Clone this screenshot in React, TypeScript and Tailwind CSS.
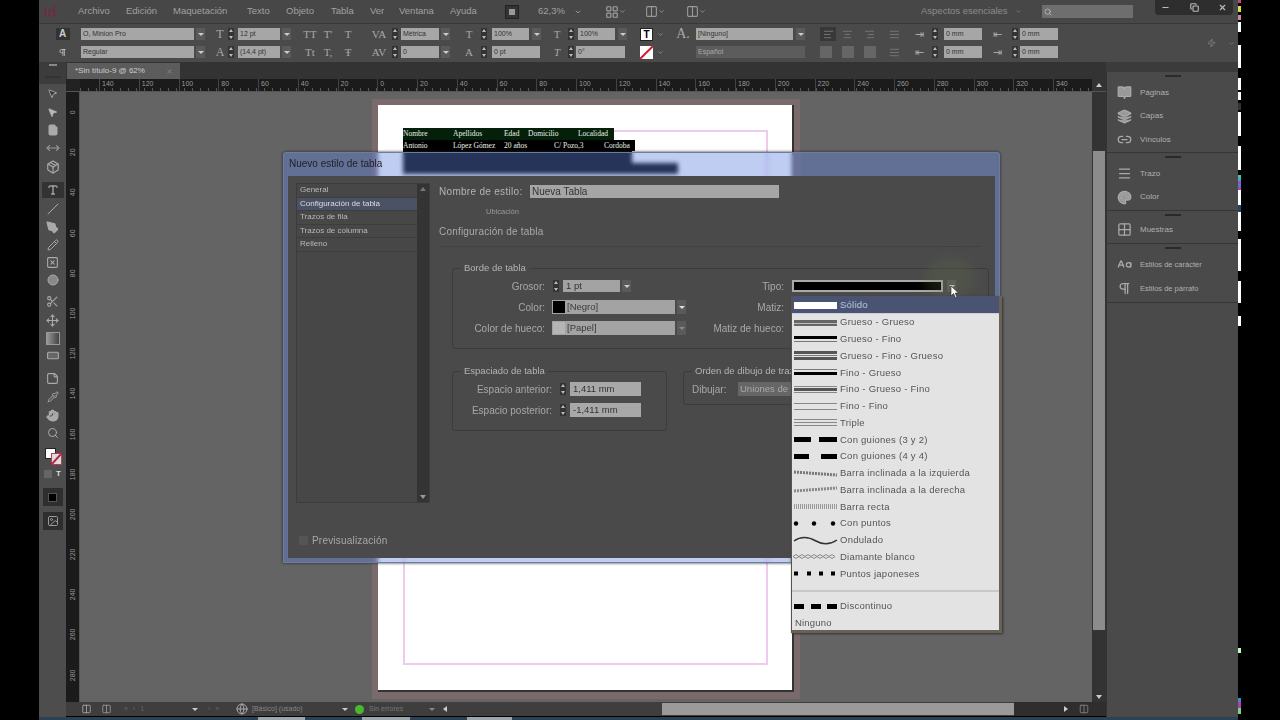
import React from "react";
import {
  MousePointer2, File, MoveHorizontal, Package, Type, Slash, PenTool, Pencil, SquareX, Circle, Scissors, Move, RectangleHorizontal,
  StickyNote, Pipette, Hand, Search, BookOpen, Layers, Link2, Menu, Palette, Grid2x2, CaseSensitive, Pilcrow, Zap, X, Minus, Copy,
  AlignLeft, AlignCenter, AlignRight, AlignJustify, ChevronDown, Globe, LayoutGrid, Columns2, Image,
} from "lucide-react";

const font = "font-['Liberation_Sans',Arial,sans-serif]";

function Chev({ dim }: { dim?: boolean }) {
  return (
    <div className={`w-[9px] h-[12px] flex items-center justify-center ${dim ? "bg-[#4d4d4d]" : "bg-[#5a5a5a]"}`}>
      <div className={`w-0 h-0 border-l-[3px] border-r-[3px] border-t-[3px] border-l-transparent border-r-transparent ${dim ? "border-t-[#888]" : "border-t-[#ccc]"}`}></div>
    </div>
  );
}

function Spin() {
  return (
    <div className="w-[6px] h-[12px] flex flex-col justify-between py-[1px] bg-[#333] items-center">
      <div className="w-0 h-0 border-l-[2px] border-r-[2px] border-b-[3px] border-l-transparent border-r-transparent border-b-[#bbb]"></div>
      <div className="w-0 h-0 border-l-[2px] border-r-[2px] border-t-[3px] border-l-transparent border-r-transparent border-t-[#bbb]"></div>
    </div>
  );
}

function Field({ w, v, dark }: { w: string; v?: string; dark?: boolean }) {
  return (
    <div className={`${w} h-[12px] ${dark ? "bg-[#5c5c5c] text-[#aaa]" : "bg-[#a6a6a6] text-[#333]"} text-[7px] leading-[12px] pl-[2px] overflow-hidden whitespace-nowrap`}>
      {v}
    </div>
  );
}

function TMark({ children, cls = "text-[11px]" }: { children: React.ReactNode; cls?: string }) {
  return <span className={`w-[16px] text-center font-['Liberation_Serif',serif] text-[#a8a8a8] leading-[12px] ${cls}`}>{children}</span>;
}

function Col({ cls, children }: { cls: string; children: React.ReactNode }) {
  return <div className={`flex flex-col gap-[6px] shrink-0 ${cls}`}>{children}</div>;
}

function Row({ children }: { children: React.ReactNode }) {
  return <div className="flex items-center h-[12px]">{children}</div>;
}

const menus: [string, string][] = [
  ["Archivo", "w-[48px]"],
  ["Edición", "w-[47px]"],
  ["Maquetación", "w-[74px]"],
  ["Texto", "w-[39px]"],
  ["Objeto", "w-[45px]"],
  ["Tabla", "w-[39px]"],
  ["Ver", "w-[29px]"],
  ["Ventana", "w-[51px]"],
  ["Ayuda", "w-[50px]"],
];

function MenuBar() {
  return (
    <div className="h-[23px] bg-[#474747] flex items-center text-[9.5px] text-[#a0a0a0] shrink-0">
      <div className="w-[39px] pl-[5px] text-[14px] text-[#6d2c48] font-bold leading-none">Id</div>
      {menus.map(([m, w]) => (
        <div key={m} className={`${w} shrink-0`}>{m}</div>
      ))}
      <div className="w-[14px] h-[14px] ml-[5px] border border-[#222] bg-[#333] flex items-center justify-center shrink-0">
        <div className="w-[6px] h-[6px] bg-[#999]"></div>
      </div>
      <div className="ml-[19px] w-[30px] shrink-0">62,3%</div>
      <ChevronDown className="w-[8px] h-[8px] ml-[6px] text-[#bbb] shrink-0" />
      <LayoutGrid className="w-[14px] h-[14px] ml-[23px] text-[#a0a0a0] shrink-0" />
      <ChevronDown className="w-[7px] h-[7px] text-[#bbb] shrink-0" />
      <Columns2 className="w-[13px] h-[13px] ml-[19px] text-[#9a9a9a] shrink-0" />
      <ChevronDown className="w-[7px] h-[7px] text-[#bbb] shrink-0" />
      <Columns2 className="w-[13px] h-[13px] ml-[21px] text-[#9a9a9a] shrink-0" />
      <ChevronDown className="w-[7px] h-[7px] text-[#bbb] shrink-0" />
      <div className="ml-[215px] w-[92px] text-[#8c8c8c] shrink-0">Aspectos esenciales</div>
      <ChevronDown className="w-[7px] h-[7px] text-[#888] ml-[2px] shrink-0" />
      <div className="ml-[20px] w-[91px] h-[13px] bg-[#6e6e6e] flex items-center pl-[2px] shrink-0">
        <Search className="w-[8px] h-[8px] text-[#ccc]" />
      </div>
      <div className="ml-[22px] h-[15px] w-[78px] -mt-[8px] bg-[#2e2e2e] rounded-b-sm flex items-center justify-between px-[6px] text-[#bbb] shrink-0">
        <Minus className="w-[9px] h-[9px]" strokeWidth={3} />
        <Copy className="w-[9px] h-[9px]" strokeWidth={3} />
        <X className="w-[9px] h-[9px]" strokeWidth={3} />
      </div>
    </div>
  );
}

function ControlPanel() {
  return (
    <div className="h-[39px] bg-[#4a4a4a] border-t border-[#383838] pt-[4px] flex shrink-0 text-[#aaa]">
      <Col cls="w-[42px] items-center pl-[5px]">
        <Row><span className="w-[14px] h-[12px] bg-[#333] text-center text-[10px] leading-[12px] font-bold text-[#ccc]">A</span></Row>
        <Row><Pilcrow className="w-[9px] h-[9px] text-[#ccc]" /></Row>
      </Col>
      <Col cls="w-[131px]">
        <Row><Field w="w-[113px]" v="O, Minion Pro" /><div className="ml-[2px]"><Chev /></div></Row>
        <Row><Field w="w-[113px]" v="Regular" /><div className="ml-[2px]"><Chev /></div></Row>
      </Col>
      <Col cls="w-[90px]">
        <Row><TMark cls="text-[12px]">T</TMark><Spin /><div className="ml-[4px]"><Field w="w-[42px]" v="12 pt" /></div><div className="ml-[2px]"><Chev /></div></Row>
        <Row><TMark cls="text-[12px]">A</TMark><Spin /><div className="ml-[4px]"><Field w="w-[42px]" v="(14,4 pt)" /></div><div className="ml-[2px]"><Chev /></div></Row>
      </Col>
      <Col cls="w-[69px]">
        <Row><TMark>TT</TMark><div className="ml-[2px]"></div><TMark>T'</TMark><div className="ml-[4px]"></div><TMark>T</TMark></Row>
        <Row><TMark>Tt</TMark><div className="ml-[2px]"></div><TMark>T,</TMark><div className="ml-[4px]"></div><TMark>Ŧ</TMark></Row>
      </Col>
      <Col cls="w-[90px]">
        <Row><TMark>VA</TMark><div className="ml-[5px]"><Spin /></div><div className="ml-[3px]"><Field w="w-[38px]" v="Métrica" /></div><div className="ml-[2px]"><Chev /></div></Row>
        <Row><TMark>AV</TMark><div className="ml-[5px]"><Spin /></div><div className="ml-[3px]"><Field w="w-[38px]" v="0" /></div><div className="ml-[2px]"><Chev /></div></Row>
      </Col>
      <Col cls="w-[88px]">
        <Row><TMark>T</TMark><div className="ml-[4px]"><Spin /></div><div className="ml-[5px]"><Field w="w-[37px]" v="100%" /></div><div className="ml-[3px]"><Chev /></div></Row>
        <Row><TMark>A</TMark><div className="ml-[4px]"><Spin /></div><div className="ml-[5px]"><Field w="w-[48px]" v="0 pt" /></div></Row>
      </Col>
      <Col cls="w-[91px]">
        <Row><TMark>T</TMark><div className="ml-[3px]"><Spin /></div><div className="ml-[4px]"><Field w="w-[37px]" v="100%" /></div><div className="ml-[3px]"><Chev /></div></Row>
        <Row><TMark cls="text-[11px] italic">T</TMark><div className="ml-[3px]"><Spin /></div><div className="ml-[2px]"><Field w="w-[49px]" v="0°" /></div></Row>
      </Col>
      <Col cls="w-[35px]">
        <Row>
          <span className="w-[13px] h-[13px] bg-white border border-[#222] text-black text-[10px] leading-[11px] text-center font-bold">T</span>
          <ChevronDown className="w-[7px] h-[7px] ml-[4px]" />
        </Row>
        <Row>
          <svg width="13" height="13" viewBox="0 0 13 13"><rect width="13" height="13" fill="#fff" /><line x1="0" y1="13" x2="13" y2="0" stroke="#d02030" strokeWidth="2" /></svg>
          <ChevronDown className="w-[7px] h-[7px] ml-[4px]" />
        </Row>
      </Col>
      <Col cls="w-[145px]">
        <Row><TMark cls="text-[14px]">A.</TMark><div className="ml-[5px]"><Field w="w-[97px]" v="[Ninguno]" /></div><div className="ml-[3px]"><Chev /></div></Row>
        <Row><div className="ml-[21px]"><Field w="w-[109px]" v="Español" dark /></div></Row>
      </Col>
      <Col cls="w-[91px]">
        <Row>
          <div className="w-[16px] h-[14px] bg-[#383838] flex items-center justify-center"><AlignLeft className="w-[11px] h-[11px] text-[#777]" /></div>
          <AlignCenter className="w-[11px] h-[11px] ml-[6px] text-[#777]" />
          <AlignRight className="w-[11px] h-[11px] ml-[11px] text-[#777]" />
          <AlignJustify className="w-[11px] h-[11px] ml-[14px] text-[#777]" />
        </Row>
        <Row>
          <div className="w-[12px] h-[12px] bg-[#666]"></div>
          <div className="w-[12px] h-[12px] ml-[10px] bg-[#666]"></div>
          <div className="w-[12px] h-[12px] ml-[10px] bg-[#666]"></div>
          <AlignJustify className="w-[11px] h-[11px] ml-[13px] text-[#777]" />
        </Row>
      </Col>
      <Col cls="w-[78px]">
        <Row><TMark>⇥</TMark><div className="ml-[5px]"><Spin /></div><div className="ml-[6px]"><Field w="w-[38px]" v="0 mm" /></div></Row>
        <Row><TMark>⇤</TMark><div className="ml-[5px]"><Spin /></div><div className="ml-[6px]"><Field w="w-[38px]" v="0 mm" /></div></Row>
      </Col>
      <Col cls="w-[70px]">
        <Row><TMark>⇤</TMark><div className="ml-[7px]"><Spin /></div><div className="ml-[2px]"><Field w="w-[38px]" v="0 mm" /></div></Row>
        <Row><TMark>⇥</TMark><div className="ml-[7px]"><Spin /></div><div className="ml-[2px]"><Field w="w-[38px]" v="0 mm" /></div></Row>
      </Col>
      <div className="ml-[148px] flex items-center gap-[12px] h-[30px]">
        <Zap className="w-[9px] h-[16px] text-[#888]" />
        <ChevronDown className="w-[7px] h-[7px] text-[#888]" />
      </div>
    </div>
  );
}

const tools: [React.ReactNode, string][] = [
  [<MousePointer2 className="w-[11px] h-[11px] fill-[#333] text-[#aaa]" />, "h-[19px]"],
  [<MousePointer2 className="w-[11px] h-[11px] fill-[#bbb] text-[#aaa]" />, "h-[18px]"],
  [<File className="w-[12px] h-[12px] fill-[#aaa] text-[#aaa]" />, "h-[18px]"],
  [<MoveHorizontal className="w-[16px] h-[14px] text-[#999]" />, "h-[18px]"],
  [<Package className="w-[14px] h-[14px] text-[#aaa]" />, "h-[19px]"],
  [<div className="w-[22px] h-[16px] bg-[#333] flex items-center justify-center"><Type className="w-[12px] h-[12px] text-[#ccc]" /></div>, "h-[21px] mt-[3px]"],
  [<Slash className="w-[12px] h-[12px] text-[#aaa]" />, "h-[18px]"],
  [<PenTool className="w-[13px] h-[13px] fill-[#aaa] text-[#aaa]" />, "h-[18px]"],
  [<Pencil className="w-[12px] h-[12px] text-[#aaa]" />, "h-[18px]"],
  [<SquareX className="w-[13px] h-[13px] text-[#aaa]" />, "h-[17px]"],
  [<Circle className="w-[14px] h-[12px] fill-[#888] text-[#aaa]" />, "h-[18px]"],
  [<Scissors className="w-[13px] h-[13px] text-[#aaa]" />, "h-[20px] mt-[2px]"],
  [<Move className="w-[13px] h-[13px] text-[#aaa]" />, "h-[18px]"],
  [<div className="w-[14px] h-[13px] border border-[#999] bg-gradient-to-r from-[#999] to-[#444]"></div>, "h-[18px]"],
  [<RectangleHorizontal className="w-[14px] h-[13px] text-[#aaa] fill-[#666]" />, "h-[17px]"],
  [<StickyNote className="w-[13px] h-[13px] text-[#aaa]" />, "h-[20px] mt-[4px]"],
  [<Pipette className="w-[12px] h-[12px] text-[#aaa]" />, "h-[18px]"],
  [<Hand className="w-[13px] h-[13px] fill-[#aaa] text-[#aaa]" />, "h-[18px]"],
  [<Search className="w-[12px] h-[12px] text-[#aaa]" />, "h-[17px]"],
];

function Tools() {
  return (
    <div className="w-[27px] bg-[#4d4d4d] flex flex-col items-center shrink-0">
      <div className="h-[22px] w-full bg-[#3c3c3c] flex flex-col items-center">
        <div className="w-[8px] h-[2px] bg-[#888] mt-[2px]"></div>
        <div className="w-[16px] h-[2px] bg-[#333] mt-[10px]"></div>
      </div>
      {tools.map(([icon, h], i) => (
        <div key={i} className={`${h} w-full flex items-center justify-center shrink-0`}>{icon}</div>
      ))}
      <div className="mt-[6px] relative w-[20px] h-[19px] shrink-0">
        <div className="absolute left-[2px] top-[1px] w-[11px] h-[11px] bg-white border border-[#222]"></div>
        <svg className="absolute left-[8px] top-[6px]" width="11" height="12" viewBox="0 0 11 12"><rect x="0.5" y="0.5" width="10" height="11" fill="#ddd" stroke="#b04058" /><line x1="0" y1="12" x2="11" y2="0" stroke="#c02040" strokeWidth="2" /></svg>
      </div>
      <div className="flex items-center h-[16px] w-full pl-[5px] gap-[4px] shrink-0">
        <div className="w-[8px] h-[8px] bg-[#666]"></div>
        <span className="text-[8px] font-bold text-[#ddd]">T</span>
      </div>
      <div className="mt-[6px] w-[20px] h-[18px] bg-[#2e2e2e] flex items-center justify-center shrink-0">
        <div className="w-[9px] h-[9px] bg-black border border-[#555]"></div>
      </div>
      <div className="mt-[6px] w-[20px] h-[18px] bg-[#2e2e2e] flex items-center justify-center shrink-0">
        <Image className="w-[12px] h-[12px] text-[#999]" />
      </div>
    </div>
  );
}

const hLabels = ["140", "120", "100", "80", "60", "40", "20", "0", "20", "40", "60", "80", "100", "120", "140", "160", "180", "200", "220", "240", "260", "280", "300", "320", "340"];
const vLabels = ["0", "20", "40", "60", "80", "100", "120", "140", "160", "180", "200", "220", "240", "260", "280"];

function HRuler() {
  return (
    <div className="h-[13px] bg-[#1b1b1b] flex shrink-0 border-b border-[#555]">
      <div className="w-[14px] bg-[#222] shrink-0"></div>
      <div className="flex-1 flex pl-[19px] overflow-hidden bg-[repeating-linear-gradient(90deg,#555_0,#555_1px,transparent_1px,transparent_8px)] bg-[length:100%_3px] bg-bottom bg-no-repeat">
        {hLabels.map((l, i) => (
          <span key={i} className="w-[39.75px] shrink-0 pl-[2px] border-l border-[#444] text-[7px] leading-[10px] text-[#999]">{l}</span>
        ))}
      </div>
      <div className="w-[14px] bg-[#333] flex items-center justify-center shrink-0">
        <div className="w-0 h-0 border-l-[3px] border-r-[3px] border-b-[4px] border-l-transparent border-r-transparent border-b-[#ccc]"></div>
      </div>
    </div>
  );
}

function VRuler() {
  return (
    <div className="w-[14px] bg-[#1b1b1b] shrink-0 flex flex-col items-center overflow-hidden border-r border-[#555]">
      {vLabels.map((l, i) => (
        <span key={i} className="h-[40.2px] shrink-0 text-[7px] text-[#999] [writing-mode:vertical-rl] rotate-180 text-center leading-none">{l}</span>
      ))}
    </div>
  );
}

const tableRows = [
  { w: "w-[211px]", bg: "bg-[#05200a]", cells: [["Nombre", "w-[50px]"], ["Apellidos", "w-[51px]"], ["Edad", "w-[24px]"], ["Domicilio", "w-[50px]"], ["Localidad", "w-[36px]"]] },
  { w: "w-[232px]", bg: "bg-black", cells: [["Antonio", "w-[50px]"], ["López Gómez", "w-[51px]"], ["20 años", "w-[50px]"], ["C/ Pozo,3", "w-[50px]"], ["Cordoba", "w-[31px]"]] },
  { w: "w-[229px]", bg: "bg-black", cells: [] },
  { w: "w-[275px]", bg: "bg-black", cells: [] },
];

function PageSheet() {
  return (
    <div className="flex-1 bg-[#646464] pt-[7px] pl-[292px] overflow-hidden">
      <div className="w-[428px] h-[600px] bg-[#7b6a6c] pt-[6px] pl-[6px]">
        <div className="w-[416px] h-[587px] bg-white border-r-2 border-b-2 border-[#333] pt-[25px] pl-[25px]">
          <div className="w-[365px] h-[535px] border-2 border-[#eecbee]">
            <div className="-mt-[4px] -ml-[2px]">
              {tableRows.map((r, i) => (
                <div key={i} className={`${r.w} ${r.bg} h-[11.5px] flex text-[7.5px] leading-[11px] text-[#e8f0e8] font-['Liberation_Serif',serif] whitespace-nowrap`}>
                  {r.cells.map(([t, w]) => (
                    <span key={t} className={`${w} shrink-0`}>{t}</span>
                  ))}
                </div>
              ))}
            </div>
          </div>
        </div>
      </div>
    </div>
  );
}

function StatusBar() {
  return (
    <div className="h-[14px] bg-[#3e3e3e] flex items-center text-[7px] text-[#888] shrink-0">
      <div className="w-[15px] shrink-0"></div>
      <Columns2 className="w-[11px] h-[10px] text-[#aaa] shrink-0" />
      <Columns2 className="w-[11px] h-[10px] ml-[9px] text-[#999] shrink-0" />
      <span className="ml-[12px] tracking-[5px] w-[30px] text-[#666] shrink-0">«‹1</span>
      <div className="w-0 h-0 ml-[38px] border-l-[3px] border-r-[3px] border-t-[3px] border-l-transparent border-r-transparent border-t-[#ccc] shrink-0"></div>
      <span className="ml-[10px] tracking-[5px] w-[20px] text-[#666] shrink-0">›»</span>
      <Globe className="w-[12px] h-[12px] ml-[8px] text-[#aaa] shrink-0" />
      <span className="ml-[4px] w-[56px] shrink-0">[Básico] (usado)</span>
      <div className="w-0 h-0 ml-[34px] border-l-[3px] border-r-[3px] border-t-[3px] border-l-transparent border-r-transparent border-t-[#ccc] shrink-0"></div>
      <div className="w-[9px] h-[9px] ml-[7px] rounded-full bg-[#4cb830] shrink-0"></div>
      <span className="ml-[5px] w-[40px] text-[#777] shrink-0">Sin errores</span>
      <div className="w-0 h-0 ml-[20px] border-l-[3px] border-r-[3px] border-t-[3px] border-l-transparent border-r-transparent border-t-[#888] shrink-0"></div>
      <div className="w-0 h-0 ml-[8px] border-t-[3px] border-b-[3px] border-r-[4px] border-t-transparent border-b-transparent border-r-[#ccc] shrink-0"></div>
      <div className="ml-[215px] w-[352px] h-[12px] bg-[#9a9a9a] shrink-0"></div>
      <div className="flex-1 h-[14px] bg-[#2e2e2e] flex items-center pl-[50px]">
        <div className="w-0 h-0 border-t-[3px] border-b-[3px] border-l-[4px] border-t-transparent border-b-transparent border-l-[#ccc]"></div>
        <Columns2 className="w-[10px] h-[10px] ml-[11px] text-[#888]" />
      </div>
    </div>
  );
}

function PanelItem({ icon, label, small }: { icon: React.ReactNode; label: string; small?: boolean }) {
  return (
    <div className="h-[23.5px] flex items-center pl-[9px]">
      <div className="w-[17px] flex justify-center shrink-0">{icon}</div>
      <span className={`ml-[7px] text-[#b0b0b0] whitespace-nowrap ${small ? "text-[7.5px]" : "text-[8px]"}`}>{label}</span>
    </div>
  );
}

function PanelGroup({ h, children }: { h: string; children: React.ReactNode }) {
  return (
    <div className={`${h} border-b border-[#363636] flex flex-col items-center shrink-0`}>
      <div className="w-[16px] h-[2px] bg-[#2a2a2a] mt-[3px]"></div>
      <div className="w-full">{children}</div>
    </div>
  );
}

function RightPanel() {
  const ic = "w-[15px] h-[15px] text-[#aaa]";
  return (
    <div className="w-[132px] bg-[#3b3b3b] pt-[10px] flex flex-col shrink-0">
      <div className="flex-1 bg-[#4a4a4a] border-l border-[#333] flex flex-col">
        <PanelGroup h="h-[81px]">
          <div className="pt-[4px]">
            <PanelItem icon={<BookOpen className={`${ic} fill-[#999]`} />} label="Páginas" />
            <PanelItem icon={<Layers className={`${ic} fill-[#999]`} />} label="Capas" />
            <PanelItem icon={<Link2 className={ic} />} label="Vínculos" />
          </div>
        </PanelGroup>
        <PanelGroup h="h-[58px]">
          <div className="pt-[4px]">
            <PanelItem icon={<Menu className={ic} />} label="Trazo" />
            <PanelItem icon={<Palette className={`${ic} fill-[#999]`} />} label="Color" />
          </div>
        </PanelGroup>
        <PanelGroup h="h-[33px]">
          <div className="pt-[2px]"><PanelItem icon={<Grid2x2 className={ic} />} label="Muestras" /></div>
        </PanelGroup>
        <PanelGroup h="h-[59px]">
          <div className="pt-[4px]">
            <PanelItem icon={<CaseSensitive className={ic} />} label="Estilos de carácter" small />
            <PanelItem icon={<Pilcrow className={ic} />} label="Estilos de párrafo" small />
          </div>
        </PanelGroup>
      </div>
    </div>
  );
}

function Group({ legend, cls, children }: { legend: string; cls: string; children: React.ReactNode }) {
  return (
    <div className={`relative border border-[#3c3c3c] rounded-[3px] shrink-0 ${cls}`}>
      <span className="absolute left-[8px] -top-[7px] bg-[#4a4a4a] px-[3px] text-[9.5px] leading-[12px] text-[#b4b4b4] whitespace-nowrap">{legend}</span>
      {children}
    </div>
  );
}

function Label({ w, children }: { w: string; children: React.ReactNode }) {
  return <span className={`${w} text-right text-[#a8a8a8] text-[10px] whitespace-nowrap shrink-0`}>{children}</span>;
}

function ColorField({ swatch, name, dim }: { swatch: string; name: string; dim?: boolean }) {
  return (
    <div className="flex items-center h-[14px] ml-[7px]">
      <div className="w-[123px] h-[14px] bg-[#a3a3a3] flex items-center">
        <div className={`w-[12px] h-[12px] ml-px ${swatch}`}></div>
        <span className="ml-[2px] text-[9.5px] text-[#3a3a3a]">{name}</span>
      </div>
      <div className="ml-[2px] w-[9px] h-[14px] flex items-center justify-center bg-[#5a5a5a]">
        <div className={`w-0 h-0 border-l-[3px] border-r-[3px] border-t-[3px] border-l-transparent border-r-transparent ${dim ? "border-t-[#888]" : "border-t-[#ddd]"}`}></div>
      </div>
    </div>
  );
}

const listItems = ["General", "Configuración de tabla", "Trazos de fila", "Trazos de columna", "Relleno"];

function Dialog() {
  return (
    <div className="absolute left-[283px] top-[152px] w-[717px] h-[411px] bg-[#5f82e2]/40 backdrop-blur-[2px] border border-[#6a7f9f] rounded-t-[3px] flex flex-col shadow-[0_0_3px_#222]">
      <div className="h-[23px] pl-[5px] text-[10px] leading-[21px] text-[#1f1f28] shrink-0">Nuevo estilo de tabla</div>
      <div className="mx-[4px] mb-[4px] flex-1 bg-[#4a4a4a] pt-[7px] pl-[8px] flex flex-col">
        <div className="flex h-[320px] shrink-0">
          <div className="w-[134px] h-[320px] flex border border-[#3c3c3c] shrink-0">
            <div className="w-[121px] bg-[#474747] text-[8px] text-[#b8b8b8]">
              {listItems.map((t) => (
                <div key={t} className={`h-[13.5px] leading-[12.5px] pl-[3px] border-b border-[#3d3d3d] ${t === "Configuración de tabla" ? "bg-[#4c5266] text-[#ddd]" : ""}`}>{t}</div>
              ))}
            </div>
            <div className="w-[12px] bg-[#343434] flex flex-col justify-between items-center py-[3px]">
              <div className="w-0 h-0 border-l-[3px] border-r-[3px] border-b-[4px] border-l-transparent border-r-transparent border-b-[#777]"></div>
              <div className="w-0 h-0 border-l-[3px] border-r-[3px] border-t-[4px] border-l-transparent border-r-transparent border-t-[#999]"></div>
            </div>
          </div>
          <div className="ml-[9px] mt-[2px] w-[550px] text-[10px] text-[#aaa] flex flex-col shrink-0">
            <div className="flex items-center h-[13px] shrink-0">
              <span className="w-[91px] text-[#b4b4b4] tracking-[0.3px] whitespace-nowrap shrink-0">Nombre de estilo:</span>
              <div className="w-[249px] h-[13px] bg-[#a5a5a5] text-[#333] leading-[13px] pl-[2px]">Nueva Tabla</div>
            </div>
            <div className="mt-[8px] ml-[47px] h-[12px] text-[7.5px] leading-[12px] text-[#999] shrink-0">Ubicación</div>
            <div className="mt-[7px] h-[14px] leading-[14px] text-[#aaa] tracking-[0.2px] shrink-0">Configuración de tabla</div>
            <div className="mt-[7px] h-px bg-[#414141] w-[541px] shrink-0"></div>
            <Group legend="Borde de tabla" cls="mt-[21px] ml-[13px] w-[537px] h-[81px] pt-[10px]">
              <div className="flex flex-col gap-[7px]">
                <div className="flex items-center h-[14px]">
                  <Label w="w-[92px]">Grosor:</Label>
                  <div className="ml-[8px]"><Spin /></div>
                  <div className="ml-[4px] w-[57px] h-[12px] bg-[#a3a3a3] text-[9.5px] text-[#333] leading-[12px] pl-[3px]">1 pt</div>
                  <div className="ml-[2px]"><Chev /></div>
                  <Label w="w-[153px]">Tipo:</Label>
                  <div className="ml-[8px] w-[151px] h-[12px] border-2 border-[#aaa] bg-black shrink-0"></div>
                  <div className="ml-[4px]"><Chev /></div>
                </div>
                <div className="flex items-center h-[14px]">
                  <Label w="w-[92px]">Color:</Label>
                  <ColorField swatch="bg-black" name="[Negro]" />
                  <Label w="w-[98px]">Matiz:</Label>
                </div>
                <div className="flex items-center h-[14px]">
                  <Label w="w-[92px]">Color de hueco:</Label>
                  <ColorField swatch="bg-[#b5b5b5]" name="[Papel]" dim />
                  <Label w="w-[98px]">Matiz de hueco:</Label>
                </div>
              </div>
            </Group>
            <div className="flex mt-[22px] ml-[13px] gap-[16px]">
              <Group legend="Espaciado de tabla" cls="w-[215px] h-[60px] pt-[10px]">
                <div className="flex flex-col gap-[7px]">
                  <div className="flex items-center h-[14px]">
                    <Label w="w-[99px]">Espacio anterior:</Label>
                    <div className="ml-[8px]"><Spin /></div>
                    <div className="ml-[4px] w-[71px] h-[14px] bg-[#a8a8a8] text-[9.5px] text-[#333] leading-[14px] pl-[3px]">1,411 mm</div>
                  </div>
                  <div className="flex items-center h-[14px]">
                    <Label w="w-[99px]">Espacio posterior:</Label>
                    <div className="ml-[8px]"><Spin /></div>
                    <div className="ml-[4px] w-[71px] h-[14px] bg-[#a8a8a8] text-[9.5px] text-[#333] leading-[14px] pl-[3px]">-1,411 mm</div>
                  </div>
                </div>
              </Group>
              <Group legend="Orden de dibujo de trazo" cls="w-[290px] h-[34px] pt-[10px]">
                <div className="flex items-center h-[14px] pl-[8px]">
                  <span className="w-[46px] text-[#a8a8a8] shrink-0">Dibujar:</span>
                  <div className="w-[120px] h-[14px] bg-[#666] text-[#aaa] text-[9.5px] leading-[14px] pl-[2px]">Uniones de trazo</div>
                </div>
              </Group>
            </div>
          </div>
        </div>
        <div className="mt-[31px] ml-[3px] flex items-center h-[12px] shrink-0">
          <div className="w-[9px] h-[9px] bg-[#555]"></div>
          <span className="ml-[4px] text-[10px] text-[#a8a8a8] tracking-[0.2px]">Previsualización</span>
        </div>
      </div>
    </div>
  );
}

function Sample({ kind }: { kind: string }) {
  const bars = (list: [number, number, string][]) => list.map(([y, h, c], i) => <rect key={i} x="1" y={y} width="43" height={h} fill={c} />);
  const dashes = (list: [number, number][]) => list.map(([x, w], i) => <rect key={i} x={x} y="4" width={w} height="5" fill="#000" />);
  let body: React.ReactNode = null;
  if (kind === "solid") body = bars([[3, 7, "#fff"]]);
  if (kind === "gg") body = bars([[4, 3, "#666"], [7, 1, "#bbb"], [8, 2, "#666"]]);
  if (kind === "gf") body = bars([[3, 3, "#000"], [8, 1, "#777"]]);
  if (kind === "gfg") body = bars([[2, 3, "#555"], [6, 1, "#777"], [8, 3, "#555"]]);
  if (kind === "fg") body = bars([[3, 1, "#777"], [6, 3, "#000"]]);
  if (kind === "fgf") body = bars([[3, 1, "#888"], [5, 3, "#555"], [9, 1, "#888"]]);
  if (kind === "ff") body = bars([[3, 1, "#888"], [9, 1, "#888"]]);
  if (kind === "tr") body = bars([[3, 1, "#888"], [6, 1, "#888"], [9, 1, "#888"]]);
  if (kind === "d32") body = dashes([[1, 17], [26, 18]]);
  if (kind === "d44") body = dashes([[1, 15], [28, 16]]);
  if (kind === "dis") body = dashes([[1, 10], [18, 10], [34, 10]]);
  if (kind === "bl") body = <line x1="1" y1="5" x2="44" y2="8" stroke="#777" strokeWidth="3" strokeDasharray="2 1" />;
  if (kind === "br") body = <line x1="1" y1="8" x2="44" y2="5" stroke="#888" strokeWidth="3" strokeDasharray="2 1" />;
  if (kind === "bs") body = <line x1="1" y1="6.5" x2="44" y2="6.5" stroke="#999" strokeWidth="5" strokeDasharray="1 1" />;
  if (kind === "pt") body = [3, 21, 40].map((x) => <circle key={x} cx={x} cy="6.5" r="2.2" fill="#000" />);
  if (kind === "wave") body = <path d="M1 7 C 8 2, 16 3, 23 7 S 38 10, 44 6" fill="none" stroke="#333" strokeWidth="1.5" />;
  if (kind === "dia") body = [3, 9, 15, 21, 27, 33, 39].map((x) => <path key={x} d={`M${x - 3} 6.5 L${x} 4.5 L${x + 3} 6.5 L${x} 8.5 Z`} fill="none" stroke="#888" />);
  if (kind === "jp") body = [3, 16, 28, 40].map((x) => <rect key={x} x={x - 2} y="4.5" width="4" height="4" fill="#000" />);
  return <svg width="45" height="13" viewBox="0 0 45 13" className="shrink-0">{body}</svg>;
}

const lineTypes: [string, string][] = [
  ["gg", "Grueso - Grueso"],
  ["gf", "Grueso - Fino"],
  ["gfg", "Grueso - Fino - Grueso"],
  ["fg", "Fino - Grueso"],
  ["fgf", "Fino - Grueso - Fino"],
  ["ff", "Fino - Fino"],
  ["tr", "Triple"],
  ["d32", "Con guiones (3 y 2)"],
  ["d44", "Con guiones (4 y 4)"],
  ["bl", "Barra inclinada a la izquierda"],
  ["br", "Barra inclinada a la derecha"],
  ["bs", "Barra recta"],
  ["pt", "Con puntos"],
  ["wave", "Ondulado"],
  ["dia", "Diamante blanco"],
  ["jp", "Puntos japoneses"],
];

function LineRow({ kind, label }: { kind: string; label: string }) {
  return (
    <div className="h-[16.75px] flex items-center pl-[1px]">
      <Sample kind={kind} />
      <span className="ml-[2px] text-[9.5px] text-[#555] tracking-[0.25px] whitespace-nowrap">{label}</span>
    </div>
  );
}

function TypeDropdown() {
  return (
    <div className="absolute left-[791px] top-[296px] w-[211px] h-[337px] bg-[#e3e3e3] border-l border-[#5a5248] border-r-[3px] border-b-[3px] border-r-[#6b6055] border-b-[#6b6055] shadow-[1px_1px_2px_#333] text-[9.5px]">
      <div className="h-[18px] bg-[#4a5472] flex items-center pl-[1px] pt-[2px] border-b border-[#ccd]">
        <Sample kind="solid" />
        <span className="ml-[2px] text-[#b8c4dc] tracking-[0.25px]">Sólido</span>
      </div>
      {lineTypes.map(([k, l]) => (
        <LineRow key={k} kind={k} label={l} />
      ))}
      <div className="mt-[8px] h-[2px] bg-[#c8c8c8]"></div>
      <div className="mt-[6px]">
        <LineRow kind="dis" label="Discontinuo" />
      </div>
      <div className="h-[16px] leading-[16px] pl-[3px] text-[#555] tracking-[0.2px]">Ninguno</div>
    </div>
  );
}

const noise: [number, string][] = [
  [3, "bg-[#c04880]"], [3, "bg-black"], [6, "bg-[#dd4]"], [3, "bg-black"], [5, "bg-[#c8a]"], [2, "bg-black"], [10, "bg-white"], [13, "bg-black"], [23, "bg-white"], [10, "bg-black"],
  [12, "bg-white"], [2, "bg-black"], [8, "bg-white"], [3, "bg-black"], [7, "bg-[#333]"], [2, "bg-black"], [24, "bg-white"], [10, "bg-black"], [24, "bg-white"], [5, "bg-black"],
  [3, "bg-[#4c8]"], [3, "bg-[#4ac]"], [3, "bg-[#a4c]"], [3, "bg-[#48c]"], [3, "bg-[#a4a]"], [15, "bg-white"], [7, "bg-[#246]"], [19, "bg-white"], [8, "bg-black"], [32, "bg-white"],
  [10, "bg-black"], [22, "bg-white"], [13, "bg-black"], [10, "bg-white"], [322, "bg-black"], [5, "bg-[#bfb]"], [45, "bg-black"], [4, "bg-[#48c]"], [6, "bg-[#a4a]"], [6, "bg-[#8c8]"],
];

export default function App() {
  return (
    <div className={`relative w-[1280px] h-[720px] bg-black overflow-hidden flex blur-[0.6px] ${font}`}>
      <div className="w-[39px] shrink-0"></div>
      <div className="w-[1199px] flex flex-col shrink-0">
        <MenuBar />
        <ControlPanel />
        <div className="h-[655px] flex shrink-0">
          <Tools />
          <div className="w-[1040px] flex flex-col shrink-0">
            <div className="h-[17px] bg-[#333] flex shrink-0">
              <div className="w-[1px] shrink-0"></div>
              <div className="w-[113px] h-[16px] mt-px bg-[#5c5c5c] flex items-center justify-between pl-[8px] pr-[7px] text-[8px] text-[#ccc]">
                <span>*Sin título-9 @ 62%</span>
                <X className="w-[7px] h-[7px] text-[#999]" />
              </div>
            </div>
            <HRuler />
            <div className="h-[610px] flex shrink-0">
              <VRuler />
              <PageSheet />
              <div className="w-[14px] bg-[#333] pt-[59px] shrink-0 flex flex-col items-center">
                <div className="w-[12px] h-[479px] bg-[#8c8c8c]"></div>
                <div className="mt-[65px] w-0 h-0 border-l-[3px] border-r-[3px] border-t-[4px] border-l-transparent border-r-transparent border-t-[#ccc]"></div>
              </div>
            </div>
            <StatusBar />
          </div>
          <RightPanel />
        </div>
        <div className="h-[3px] bg-[#2c4254] flex shrink-0">
          <div className="ml-[219px] w-[47px] bg-[#9aa5ac]"></div>
          <div className="ml-[57px] w-[48px] bg-[#9aa5ac]"></div>
          <div className="ml-[57px] w-[45px] bg-[#9aa5ac]"></div>
        </div>
      </div>
      <div className="w-[3px] flex flex-col shrink-0">
        {noise.map(([h, c], i) => (
          <div key={i} className={c} style={{ height: h }}></div>
        ))}
      </div>

      <Dialog />
      <div className="absolute left-[925px] top-[258px] w-[50px] h-[42px] rounded-full bg-[#6b7a4a]/20 blur-[6px]"></div>
      <TypeDropdown />
      <svg className="absolute left-[950px] top-[285px]" width="10" height="14" viewBox="0 0 10 14">
        <path d="M1 1 L1 11 L3.5 8.5 L5.5 13 L7 12.3 L5.2 8 L8.5 8 Z" fill="#fff" stroke="#222" strokeWidth="0.6" />
      </svg>
    </div>
  );
}
